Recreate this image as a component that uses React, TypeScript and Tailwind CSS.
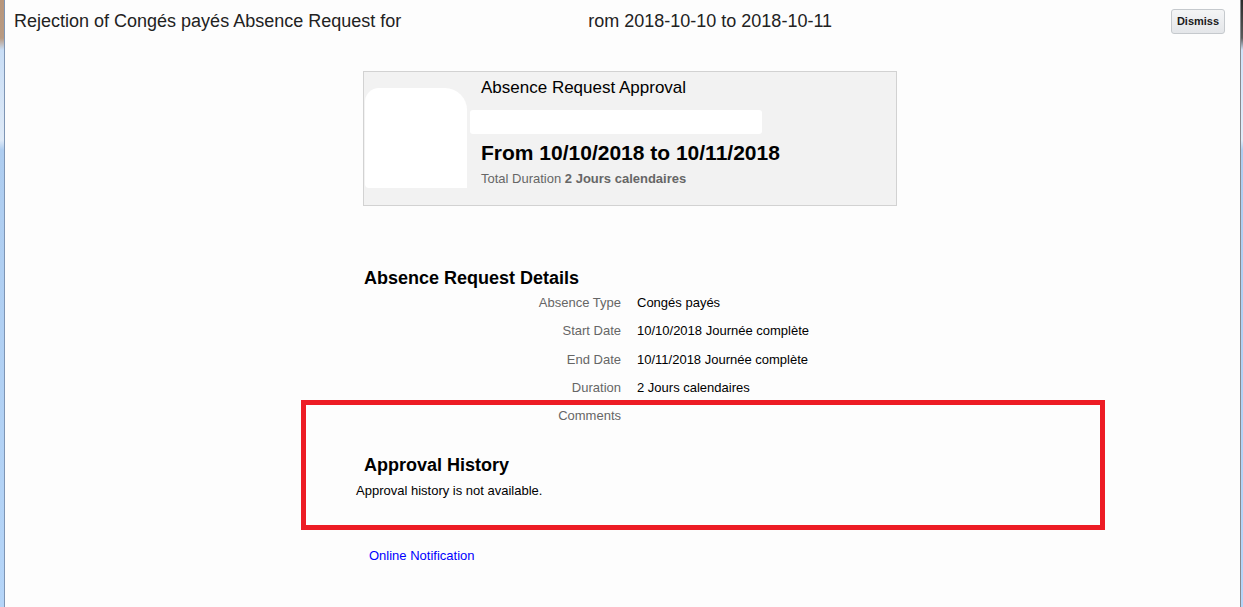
import React from "react";

const rows: { label: string; value: string }[] = [
  { label: "Absence Type", value: "Congés payés" },
  { label: "Start Date", value: "10/10/2018 Journée complète" },
  { label: "End Date", value: "10/11/2018 Journée complète" },
  { label: "Duration", value: "2 Jours calendaires" },
  { label: "Comments", value: "" },
];

export default function App() {
  return (
    <div
      className="relative flex h-screen w-full overflow-hidden bg-[#fdfdfd] text-[#222]"
      style={{ fontFamily: '"Liberation Sans", Arial, sans-serif' }}
    >
      {/* window frame, left */}
      <div className="flex h-full w-[5px] shrink-0">
        <div className="h-full w-[4px] bg-[linear-gradient(to_bottom,#b7967c_0px,#b89a82_38px,#c9def6_50px,#dfeaf7_140px,#aecdf0_150px,#b5d5f8_100%)]" />
        <div className="h-full w-[1px] bg-[#7e95b4]" />
      </div>

      <div className="flex min-w-0 flex-1 flex-col">
        {/* Header */}
        <div className="flex items-start justify-between pl-[9px] pr-[15px]">
          <h1 className="pt-[10px] text-[18px] leading-[22px] font-normal text-[#222] whitespace-nowrap">
            <span>Rejection of Congés payés Absence Request for</span>
            <span className="ml-[187px]">rom 2018-10-10 to 2018-10-11</span>
          </h1>
          <button className="mt-[9px] h-[25px] w-[54px] rounded-[3px] border border-[#c5c9cd] bg-[linear-gradient(to_bottom,#f4f5f6,#e4e6e9)] text-[11px] font-bold text-[#1a1a1a]">
            Dismiss
          </button>
        </div>

        {/* Body */}
        <div className="flex flex-col pl-[358px]">
          {/* Summary card */}
          <div className="mt-[37px] flex w-[534px] items-start border border-[#d2d2d2] bg-[#f2f2f2] pt-[6px] pb-[17px]">
            <div className="w-[117px] shrink-0 pl-[1px] pt-[10px]">
              <div className="h-[100px] w-[102px] rounded-tl-[14px] rounded-tr-[22px] rounded-bl-[4px] bg-white" />
            </div>
            <div className="flex flex-col">
              <div className="text-[17px] leading-[20px] text-black">Absence Request Approval</div>
              <div className="-ml-[11px] mt-[12px] h-[24px] w-[292px] rounded-[3px] bg-white" />
              <div className="mt-[7px] text-[21px] leading-[24px] font-bold text-black">
                From 10/10/2018 to 10/11/2018
              </div>
              <div className="mt-[6px] text-[13px] leading-[16px] text-[#666]">
                Total Duration <span className="font-bold">2 Jours calendaires</span>
              </div>
            </div>
          </div>

          {/* Details */}
          <div className="mt-[61px] flex flex-col">
            <h2 className="pl-[1px] text-[18px] leading-[22px] font-bold text-black">Absence Request Details</h2>
            <div className="flex flex-col">
              {rows.map((r) => (
                <div key={r.label} className="flex h-[28.25px] items-center text-[13px] leading-[16px]">
                  <div className="w-[258px] shrink-0 text-right text-[#666]">{r.label}</div>
                  <div className="pl-[16px] text-black">{r.value}</div>
                </div>
              ))}
            </div>
          </div>

          {/* Approval history */}
          <div className="mt-[24px] flex flex-col">
            <h2 className="pl-[1px] text-[18px] leading-[22px] font-bold text-black">Approval History</h2>
            <p className="-ml-[7px] mt-[7px] text-[13px] leading-[16px] text-black">
              Approval history is not available.
            </p>
          </div>

          <a href="#" className="mt-[49px] pl-[6px] text-[13px] leading-[16px] text-[#0000ff]">
            Online Notification
          </a>
        </div>
      </div>

      {/* window frame, right */}
      <div className="flex h-full w-[3px] shrink-0">
        <div className="h-full w-[1px] bg-[#86898e]" />
        <div className="h-full w-[2px] bg-[linear-gradient(to_bottom,#2a2a2a_0px,#5a5a5a_38px,#cfe2f8_50px,#e2ecf8_140px,#aecdf0_150px,#b5d5f8_100%)]" />
      </div>

      {/* red annotation box */}
      <div className="pointer-events-none absolute left-[301px] top-[400px] h-[130px] w-[804px] border-[5px] border-[#ed1c24]" />
    </div>
  );
}
